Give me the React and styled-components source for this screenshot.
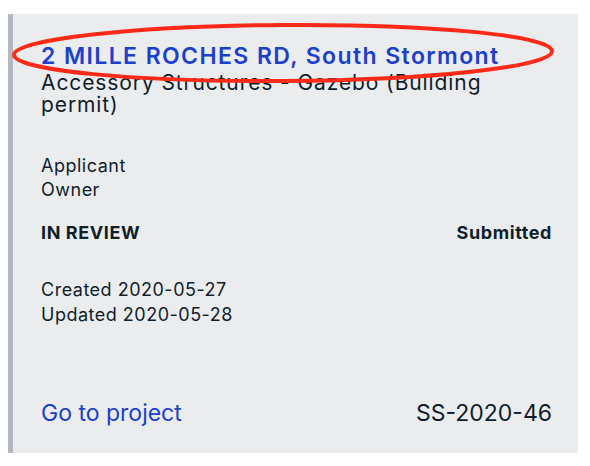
import React from "react";
import styled, { createGlobalStyle } from "styled-components";

const GlobalStyle = createGlobalStyle`
  body {
    margin: 0;
    background: #ffffff;
    font-family: Inter, "Noto Sans", sans-serif;
  }
`;

const Page = styled.div`
  padding: 14px 0 0 8px;
`;

const Card = styled.div`
  position: relative;
  box-sizing: border-box;
  width: 570px;
  height: 439px;
  background: #ebecee;
  border-left: 5px solid #b3b8bf;
  padding: 29px 26px 0 28px;
  display: flex;
  flex-direction: column;
  color: #0f1e2c;
`;

const Title = styled.a`
  font-size: 23px;
  font-weight: 600;
  letter-spacing: 1.4px;
  line-height: 26px;
  color: #1a3fd1;
  text-decoration: none;
`;

const Description = styled.div`
  margin-top: 3px;
  font-size: 21px;
  letter-spacing: 0.9px;
  line-height: 22px;
`;

const Roles = styled.div`
  margin-top: 38px;
  font-size: 18px;
  letter-spacing: 0.5px;
  line-height: 24px;
`;

const StatusRow = styled.div`
  margin-top: 19px;
  display: flex;
  justify-content: space-between;
  font-size: 18px;
  font-weight: 700;
  letter-spacing: 0.6px;
  line-height: 24px;
`;

const Dates = styled.div`
  margin-top: 32px;
  font-size: 18px;
  letter-spacing: 0.5px;
  line-height: 25px;
`;

const Footer = styled.div`
  margin-top: auto;
  margin-bottom: 26px;
  display: flex;
  justify-content: space-between;
  align-items: baseline;
  font-size: 23px;
  line-height: 28px;
`;

const ProjectLink = styled.a`
  color: #1a3fd1;
  text-decoration: none;
`;

const Annotation = styled.svg`
  position: absolute;
  left: -5px;
  top: -14px;
  pointer-events: none;
`;

export default function App() {
  return (
    <>
      <GlobalStyle />
      <Page>
        <Card>
          <Annotation width="570" height="100" viewBox="0 0 570 100">
            <ellipse
              cx="275"
              cy="53"
              rx="269"
              ry="28"
              fill="none"
              stroke="#ff2a17"
              strokeWidth="4"
              transform="rotate(-0.4 275 53)"
            />
          </Annotation>
          <Title href="#">2 MILLE ROCHES RD, South Stormont</Title>
          <Description>Accessory Structures - Gazebo (Building permit)</Description>
          <Roles>
            <div>Applicant</div>
            <div>Owner</div>
          </Roles>
          <StatusRow>
            <span>IN REVIEW</span>
            <span>Submitted</span>
          </StatusRow>
          <Dates>
            <div>Created 2020-05-27</div>
            <div>Updated 2020-05-28</div>
          </Dates>
          <Footer>
            <ProjectLink href="#">Go to project</ProjectLink>
            <span>SS-2020-46</span>
          </Footer>
        </Card>
      </Page>
    </>
  );
}
